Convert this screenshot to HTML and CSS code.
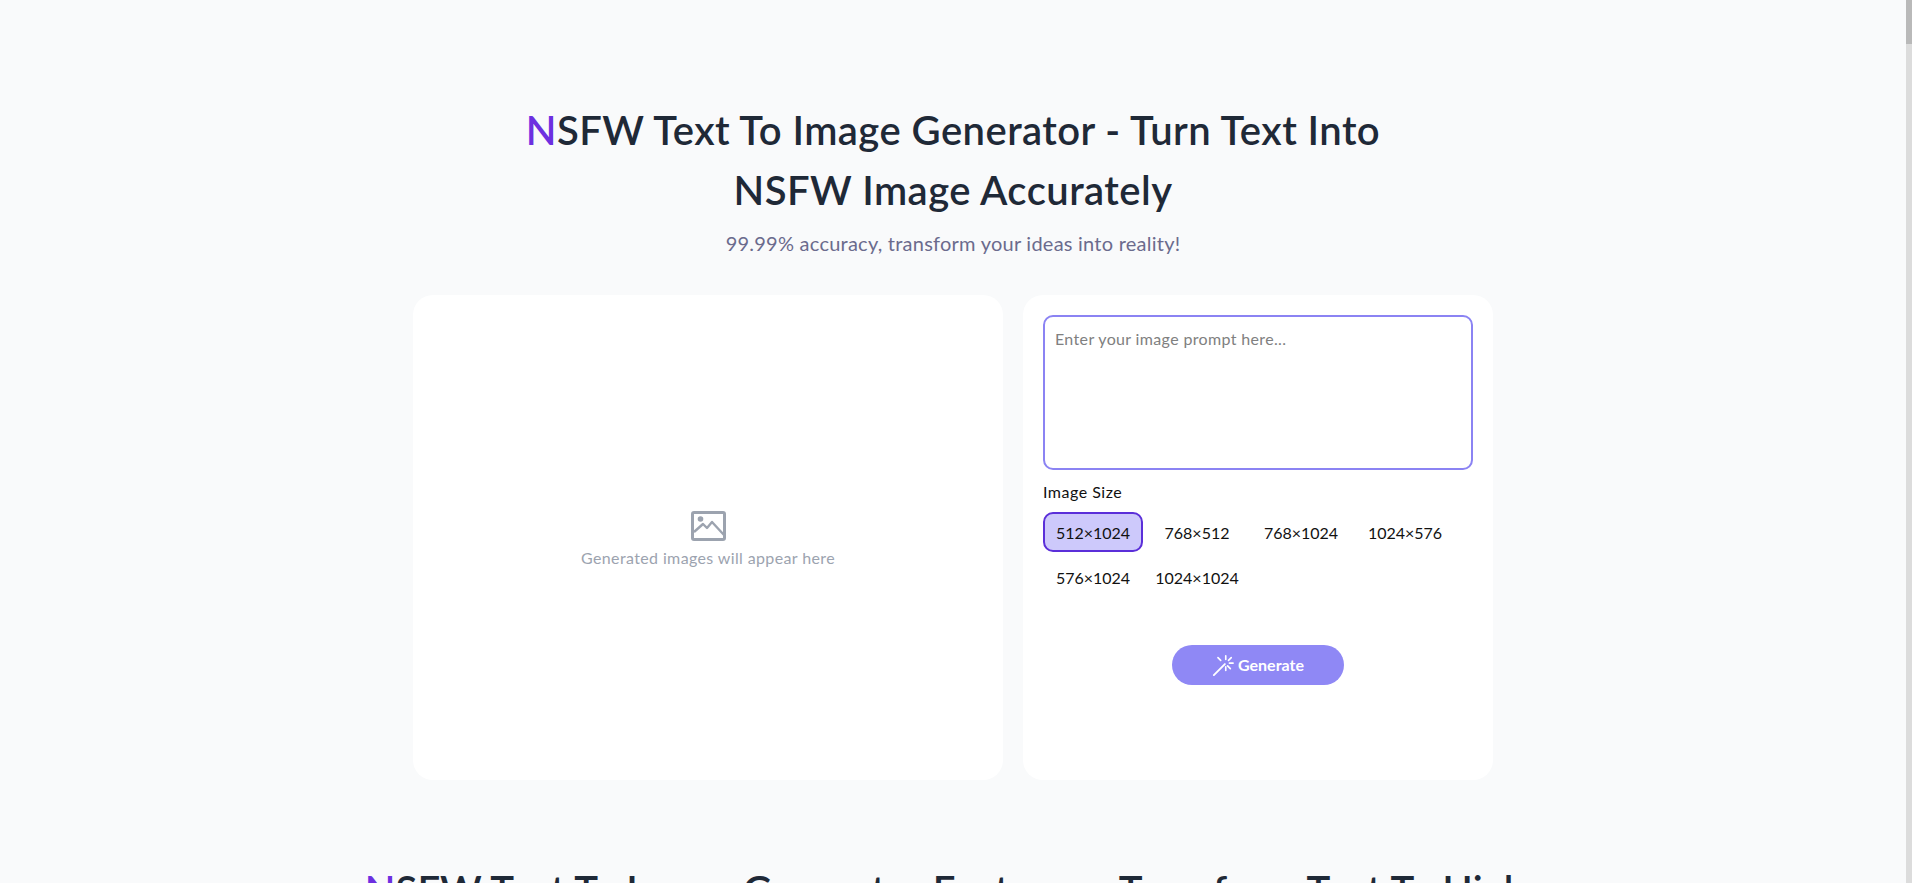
FILE: index.html
```html
<!DOCTYPE html>
<html lang="en">
<head>
<meta charset="utf-8">
<title>NSFW Text To Image Generator</title>
<link rel="stylesheet" href="styles.css">
</head>
<body>
<main class="page">
  <section class="hero">
    <h1 class="title"><span class="accent">N</span>SFW Text To Image Generator - Turn Text Into<br>NSFW Image Accurately</h1>
    <p class="subtitle">99.99% accuracy, transform your ideas into reality!</p>
  </section>
  <section class="workspace">
    <div class="card preview">
      <svg class="preview-icon" viewBox="0 0 35 30" fill="none" stroke="currentColor" stroke-width="3" stroke-linejoin="round">
        <rect x="1.5" y="1.5" width="32" height="27" rx="1.5"/>
        <path d="M3 21l9-8 4 4 5-6 12 13" stroke-width="2.4"/>
        <circle cx="9.5" cy="8" r="2.8" fill="currentColor" stroke="none"/>
      </svg>
      <p class="preview-text">Generated images will appear here</p>
    </div>
    <div class="card controls">
      <textarea class="prompt" placeholder="Enter your image prompt here..."></textarea>
      <div class="label">Image Size</div>
      <div class="sizes">
        <button class="size selected">512×1024</button>
        <button class="size">768×512</button>
        <button class="size">768×1024</button>
        <button class="size">1024×576</button>
        <button class="size">576×1024</button>
        <button class="size">1024×1024</button>
      </div>
      <div class="actions">
        <button class="generate">
          <svg class="wand" viewBox="0 0 24 24" fill="none" stroke="currentColor" stroke-width="2" stroke-linecap="round">
            <path d="M2 23L14 11"/>
            <path d="M15 2v4M15 14v4M6.5 4l3 3M23 10h-4M21 4l-3 3M20 16l-3-3" stroke-width="1.8"/>
          </svg>
          Generate
        </button>
      </div>
    </div>
  </section>
  <section class="features">
    <h2 class="title features-title"><span class="accent">N</span>SFW Text To Image Generator Features - Transform Text To High-<br>Quality Images</h2>
  </section>
</main>
<div class="scrollbar"><div class="scrollbar-thumb"></div></div>
</body>
</html>
```
FILE: styles.css
```css
* { box-sizing: border-box; }
html { background: #f9fafb; }
html::-webkit-scrollbar { display: none; }
body {
  margin: 0;
  font-family: "Lato", sans-serif;
  color: #000;
  background: #f9fafb;
  overflow-x: hidden;
}
.page { display: flex; flex-direction: column; align-items: center; padding: 100px 6px 0 0; height: 883px; overflow: hidden; }
.hero { text-align: center; }
.title { margin: 0; font-size: 40px; line-height: 60px; font-weight: 600; letter-spacing: 0.45px; color: #1f2937; white-space: nowrap; text-align: center; }
.features-title { letter-spacing: 0.05px; }
.accent { color: #6d2fe0; }
.subtitle { margin: 9px 0 0; padding-bottom: 1px; font-size: 20px; line-height: 28px; letter-spacing: 0.24px; color: #6b6b8d; }
.workspace { display: flex; gap: 20px; margin-top: 37px; flex: none; }
.card { background: #fff; border-radius: 20px; height: 485px; }
.preview { width: 590px; padding-top: 6px; display: flex; flex-direction: column; align-items: center; justify-content: center; color: #9ca3af; }
.preview-icon { width: 35px; height: 30px; display: block; }
.preview-text { margin: 5px 0 0; font-size: 16px; line-height: 24px; letter-spacing: 0.37px; }
.controls { width: 470px; padding: 20px; }
.prompt {
  display: block; width: 430px; height: 155px; padding: 10px; resize: none;
  border: 2px solid #8b83f3; border-radius: 10px; outline: none;
  font: 16px/24px "Lato", sans-serif; letter-spacing: 0.35px; background: #fff;
}
.prompt::placeholder { color: #808080; }
.label { margin-top: 10px; font-size: 16px; line-height: 24px; letter-spacing: 0.5px; color: #111; }
.sizes { display: flex; flex-wrap: wrap; gap: 5px 4px; margin-top: 8px; }
.size {
  width: 100px; height: 40px; padding: 2px 0 0; border: 2px solid transparent; border-radius: 10px;
  background: transparent; color: #111; font: 16px/24px "Lato", sans-serif;
}
.size.selected { background: #cdc9fb; border-color: #5b2fd9; }
.actions { display: flex; justify-content: center; margin-top: 48px; }
.generate {
  width: 172px; height: 40px; border: 0; border-radius: 20px; background: #8f88f5; color: #fff;
  display: flex; align-items: center; justify-content: center; gap: 4px;
  font: 700 16px/24px "Lato", sans-serif;
}
.wand { width: 22px; height: 22px; }
.features { margin-top: 80px; flex: none; }
.scrollbar { position: fixed; top: 0; right: 0; bottom: 0; width: 6px; background: #dcdcdc; }
.scrollbar-thumb { height: 44px; background: #b9b9b9; }
```
